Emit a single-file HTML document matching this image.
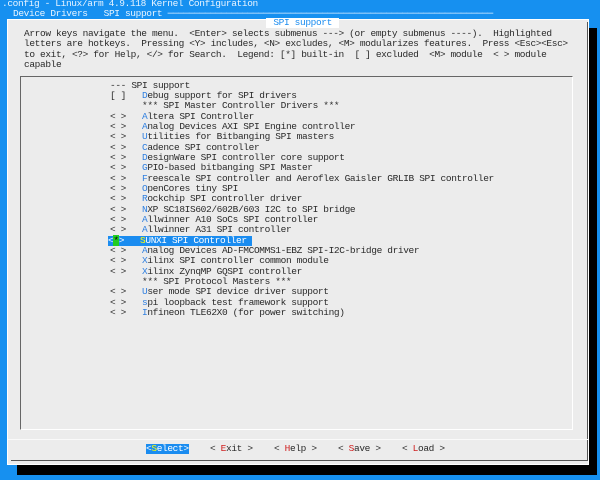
<!DOCTYPE html>
<html><head><meta charset="utf-8"><style>
body{margin:0;width:600px;height:480px;background:#1690f0;position:relative;overflow:hidden;font-family:"Liberation Mono","DejaVu Sans Mono",monospace;font-size:9.5px;letter-spacing:-0.37px;}
.r{position:absolute;white-space:pre;line-height:10px;height:10px;}
.h{color:#e8f4ff}
.t{color:#2a2a2a}
.k{color:#2f7fe0}
.rd{color:#d02020}
#shadow{position:absolute;left:17px;top:28px;width:580px;height:447px;background:#000}
#dlg{position:absolute;left:7px;top:19px;width:582px;height:446px;background:#ececec;border:1px solid #fff;box-sizing:border-box}
#list{position:absolute;left:20px;top:76px;width:553px;height:354px;border-left:1px solid #666;border-top:1px solid #666;border-right:1px solid #fff;border-bottom:1px solid #fff;box-sizing:border-box}
#sep{position:absolute;left:8px;top:439px;width:580px;height:1px;background:#fafafa}
#bot{position:absolute;left:11px;top:460px;width:577px;height:1px;background:#555}
#rt{position:absolute;left:587px;top:22px;width:1px;height:438px;background:#555}
.sel{background:#1a8cf0;color:#fff}
</style></head><body>
<div class="r h" style="left:2px;top:-1px">.config - Linux/arm 4.9.118 Kernel Configuration</div>
<div class="r h" style="left:13px;top:9px">Device Drivers   SPI support ─────────────────────────────────────────────────────────────</div>
<div id="shadow"></div>
<div id="dlg"></div>
<div id="rt"></div>
<div id="list"></div>
<div id="sep"></div>
<div id="bot"></div>
<div class="r" style="left:266px;top:18px;color:#1a8cf0;background:#fff;padding:0 2px"> SPI support </div>
<div class="r t" style="left:24px;top:29px">Arrow keys navigate the menu.  &lt;Enter&gt; selects submenus ---&gt; (or empty submenus ----).  Highlighted</div>
<div class="r t" style="left:24px;top:39px">letters are hotkeys.  Pressing &lt;Y&gt; includes, &lt;N&gt; excludes, &lt;M&gt; modularizes features.  Press &lt;Esc&gt;&lt;Esc&gt;</div>
<div class="r t" style="left:24px;top:50px">to exit, &lt;?&gt; for Help, &lt;/&gt; for Search.  Legend: [*] built-in  [ ] excluded  &lt;M&gt; module  &lt; &gt; module</div>
<div class="r t" style="left:24px;top:60px">capable</div>

<div class="r t" style="left:110px;top:81px">--- SPI support</div>
<div class="r t" style="left:110px;top:91px">[ ]   <span class="k">D</span>ebug support for SPI drivers</div>
<div class="r t" style="left:110px;top:101px">      *** SPI Master Controller Drivers ***</div>
<div class="r t" style="left:110px;top:112px">&lt; &gt;   <span class="k">A</span>ltera SPI Controller</div>
<div class="r t" style="left:110px;top:122px">&lt; &gt;   <span class="k">A</span>nalog Devices AXI SPI Engine controller</div>
<div class="r t" style="left:110px;top:132px">&lt; &gt;   <span class="k">U</span>tilities for Bitbanging SPI masters</div>
<div class="r t" style="left:110px;top:143px">&lt; &gt;   <span class="k">C</span>adence SPI controller</div>
<div class="r t" style="left:110px;top:153px">&lt; &gt;   <span class="k">D</span>esignWare SPI controller core support</div>
<div class="r t" style="left:110px;top:163px">&lt; &gt;   <span class="k">G</span>PIO-based bitbanging SPI Master</div>
<div class="r t" style="left:110px;top:174px">&lt; &gt;   <span class="k">F</span>reescale SPI controller and Aeroflex Gaisler GRLIB SPI controller</div>
<div class="r t" style="left:110px;top:184px">&lt; &gt;   <span class="k">O</span>penCores tiny SPI</div>
<div class="r t" style="left:110px;top:194px">&lt; &gt;   <span class="k">R</span>ockchip SPI controller driver</div>
<div class="r t" style="left:110px;top:205px">&lt; &gt;   <span class="k">N</span>XP SC18IS602/602B/603 I2C to SPI bridge</div>
<div class="r t" style="left:110px;top:215px">&lt; &gt;   <span class="k">A</span>llwinner A10 SoCs SPI controller</div>
<div class="r t" style="left:110px;top:225px">&lt; &gt;   <span class="k">A</span>llwinner A31 SPI controller</div>
<div class="r sel" style="left:108px;top:236px">&lt;<span style="background:#2c2;color:#000">*</span>&gt;   <span style="color:#ff0">S</span>UNXI SPI Controller </div>
<div class="r t" style="left:110px;top:246px">&lt; &gt;   <span class="k">A</span>nalog Devices AD-FMCOMMS1-EBZ SPI-I2C-bridge driver</div>
<div class="r t" style="left:110px;top:256px">&lt; &gt;   <span class="k">X</span>ilinx SPI controller common module</div>
<div class="r t" style="left:110px;top:267px">&lt; &gt;   <span class="k">X</span>ilinx ZynqMP GQSPI controller</div>
<div class="r t" style="left:110px;top:277px">      *** SPI Protocol Masters ***</div>
<div class="r t" style="left:110px;top:287px">&lt; &gt;   <span class="k">U</span>ser mode SPI device driver support</div>
<div class="r t" style="left:110px;top:298px">&lt; &gt;   <span class="k">s</span>pi loopback test framework support</div>
<div class="r t" style="left:110px;top:308px">&lt; &gt;   <span class="k">I</span>nfineon TLE62X0 (for power switching)</div>

<div class="r sel" style="left:146px;top:444px">&lt;<span style="color:#ff0">S</span>elect&gt;</div>
<div class="r t" style="left:210px;top:444px">&lt; <span class="rd">E</span>xit &gt;</div>
<div class="r t" style="left:274px;top:444px">&lt; <span class="rd">H</span>elp &gt;</div>
<div class="r t" style="left:338px;top:444px">&lt; <span class="rd">S</span>ave &gt;</div>
<div class="r t" style="left:402px;top:444px">&lt; <span class="rd">L</span>oad &gt;</div>
</body></html>
